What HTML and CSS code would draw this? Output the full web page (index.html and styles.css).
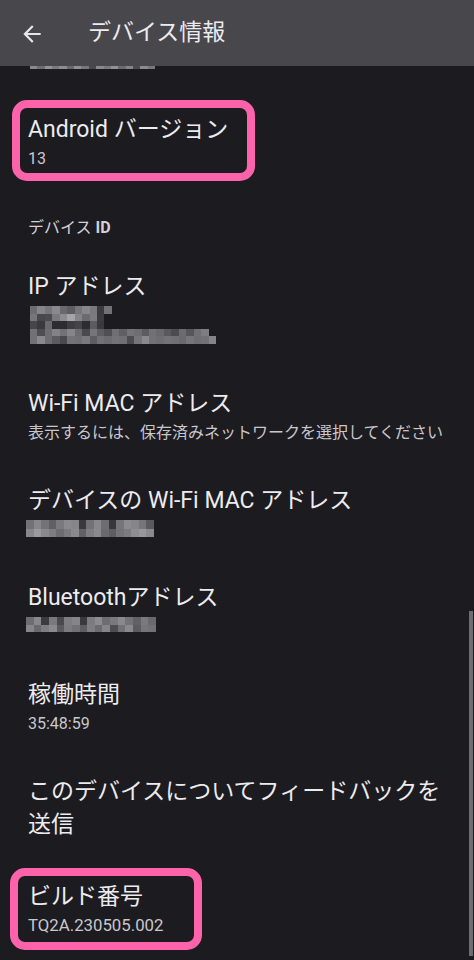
FILE: index.html
```html
<!DOCTYPE html>
<html lang="ja">
<head>
<meta charset="utf-8">
<title>デバイス情報</title>
<link rel="stylesheet" href="styles.css">
</head>
<body>
<div class="screen">
  <header class="appbar">
    <span class="back">
      <svg viewBox="0 0 24 24" width="26" height="26"><path fill="#e8e6ea" d="M20 11H7.83l5.59-5.59L12 4l-8 8 8 8 1.41-1.41L7.83 13H20v-2z"/></svg>
    </span>
    <h1 class="appbar-title">デバイス情報</h1>
  </header>

  <main class="list">
    <div class="peek">
      <svg class="mosaic" viewBox="0 0 17 1" width="125" height="3" preserveAspectRatio="none" shape-rendering="crispEdges">
        <rect x="0" y="0" width="1" height="1" fill="#8a8a8e"/><rect x="1" y="0" width="1" height="1" fill="#6e6e72"/><rect x="2" y="0" width="1" height="1" fill="#949498"/><rect x="3" y="0" width="1" height="1" fill="#7c7c80"/><rect x="4" y="0" width="1" height="1" fill="#8e8e92"/><rect x="5" y="0" width="1" height="1" fill="#6a6a6e"/><rect x="6" y="0" width="1" height="1" fill="#909094"/><rect x="7" y="0" width="1" height="1" fill="#78787c"/><rect x="8" y="0" width="1" height="1" fill="#4a4a4e"/><rect x="9" y="0" width="1" height="1" fill="#8a8a8e"/><rect x="10" y="0" width="1" height="1" fill="#7a7a7e"/><rect x="11" y="0" width="1" height="1" fill="#929296"/><rect x="12" y="0" width="1" height="1" fill="#6c6c70"/><rect x="13" y="0" width="1" height="1" fill="#86868a"/><rect x="14" y="0" width="1" height="1" fill="#4c4c50"/><rect x="15" y="0" width="1" height="1" fill="#8c8c90"/><rect x="16" y="0" width="1" height="1" fill="#78787c"/>
      </svg>
    </div>

    <div class="item">
      <div class="title">Android バージョン</div>
      <div class="sub">13</div>
      <span class="mark mark-android"></span>
    </div>

    <div class="category">デバイス <span class="category-strong">ID</span></div>

    <div class="item">
      <div class="title">IP アドレス</div>
      <svg class="mosaic mosaic-ip" viewBox="0 0 25 5" width="186" height="38" preserveAspectRatio="none" shape-rendering="crispEdges">
        <rect x="0" y="0" width="1" height="1" fill="#6d6d71"/><rect x="1" y="0" width="1" height="1" fill="#868689"/><rect x="2" y="0" width="1" height="1" fill="#77777b"/><rect x="3" y="0" width="1" height="1" fill="#8a8a8e"/><rect x="4" y="0" width="1" height="1" fill="#6a6a6e"/><rect x="5" y="0" width="1" height="1" fill="#5e5e62"/><rect x="6" y="0" width="1" height="1" fill="#77777b"/><rect x="7" y="0" width="1" height="1" fill="#88888c"/><rect x="8" y="0" width="1" height="1" fill="#7a7a7e"/><rect x="9" y="0" width="1" height="1" fill="#3a3a3f"/><rect x="10" y="0" width="1" height="1" fill="#727276"/>
        <rect x="0" y="1" width="1" height="1" fill="#77777b"/><rect x="1" y="1" width="1" height="1" fill="#48484c"/><rect x="2" y="1" width="1" height="1" fill="#4c4c50"/><rect x="3" y="1" width="1" height="1" fill="#7a7a7e"/><rect x="4" y="1" width="1" height="1" fill="#8d8d91"/><rect x="5" y="1" width="1" height="1" fill="#a5a5a9"/><rect x="6" y="1" width="1" height="1" fill="#858589"/><rect x="7" y="1" width="1" height="1" fill="#6c6c70"/><rect x="8" y="1" width="1" height="1" fill="#7c7c80"/><rect x="9" y="1" width="1" height="1" fill="#3c3c40"/>
        <rect x="0" y="2" width="1" height="1" fill="#46464a"/><rect x="1" y="2" width="1" height="1" fill="#3a3a3e"/><rect x="2" y="2" width="1" height="1" fill="#6a6a6e"/><rect x="3" y="2" width="1" height="1" fill="#2c2c31"/><rect x="4" y="2" width="1" height="1" fill="#2c2c31"/><rect x="5" y="2" width="1" height="1" fill="#3e3e42"/><rect x="6" y="2" width="1" height="1" fill="#44444a"/><rect x="7" y="2" width="1" height="1" fill="#2c2c31"/><rect x="8" y="2" width="1" height="1" fill="#5c5c60"/><rect x="9" y="2" width="1" height="1" fill="#3a3a3e"/>
        <rect x="0" y="3" width="1" height="1" fill="#727276"/><rect x="1" y="3" width="1" height="1" fill="#4e4e52"/><rect x="2" y="3" width="1" height="1" fill="#6e6e72"/><rect x="3" y="3" width="1" height="1" fill="#838387"/><rect x="4" y="3" width="1" height="1" fill="#727276"/><rect x="5" y="3" width="1" height="1" fill="#86868a"/><rect x="6" y="3" width="1" height="1" fill="#6c6c70"/><rect x="7" y="3" width="1" height="1" fill="#4a4a4e"/><rect x="8" y="3" width="1" height="1" fill="#767679"/><rect x="9" y="3" width="1" height="1" fill="#5e5e62"/><rect x="10" y="3" width="1" height="1" fill="#505054"/><rect x="11" y="3" width="1" height="1" fill="#707074"/><rect x="12" y="3" width="1" height="1" fill="#606064"/><rect x="13" y="3" width="1" height="1" fill="#747478"/><rect x="14" y="3" width="1" height="1" fill="#6e6e72"/><rect x="15" y="3" width="1" height="1" fill="#5c5c60"/><rect x="16" y="3" width="1" height="1" fill="#727276"/><rect x="17" y="3" width="1" height="1" fill="#6a6a6e"/><rect x="18" y="3" width="1" height="1" fill="#5a5a5e"/><rect x="19" y="3" width="1" height="1" fill="#4c4c50"/><rect x="20" y="3" width="1" height="1" fill="#6c6c70"/><rect x="21" y="3" width="1" height="1" fill="#56565a"/><rect x="22" y="3" width="1" height="1" fill="#707074"/><rect x="23" y="3" width="1" height="1" fill="#7e7e82"/>
        <rect x="0" y="4" width="1" height="1" fill="#727276"/><rect x="1" y="4" width="1" height="1" fill="#8a8a8e"/><rect x="2" y="4" width="1" height="1" fill="#6e6e72"/><rect x="3" y="4" width="1" height="1" fill="#5c5c60"/><rect x="4" y="4" width="1" height="1" fill="#4a4a4e"/><rect x="5" y="4" width="1" height="1" fill="#747478"/><rect x="6" y="4" width="1" height="1" fill="#707074"/><rect x="7" y="4" width="1" height="1" fill="#7a7a7e"/><rect x="8" y="4" width="1" height="1" fill="#5e5e62"/><rect x="9" y="4" width="1" height="1" fill="#727276"/><rect x="10" y="4" width="1" height="1" fill="#6c6c70"/><rect x="11" y="4" width="1" height="1" fill="#747478"/><rect x="12" y="4" width="1" height="1" fill="#707074"/><rect x="13" y="4" width="1" height="1" fill="#4c4c50"/><rect x="14" y="4" width="1" height="1" fill="#767679"/><rect x="15" y="4" width="1" height="1" fill="#8a8a8e"/><rect x="16" y="4" width="1" height="1" fill="#727276"/><rect x="17" y="4" width="1" height="1" fill="#6e6e72"/><rect x="18" y="4" width="1" height="1" fill="#747478"/><rect x="19" y="4" width="1" height="1" fill="#707074"/><rect x="20" y="4" width="1" height="1" fill="#6a6a6e"/><rect x="21" y="4" width="1" height="1" fill="#767679"/><rect x="22" y="4" width="1" height="1" fill="#6e6e72"/><rect x="23" y="4" width="1" height="1" fill="#727276"/><rect x="24" y="4" width="1" height="1" fill="#858589"/>
      </svg>
    </div>

    <div class="item">
      <div class="title">Wi-Fi MAC アドレス</div>
      <div class="sub">表示するには、保存済みネットワークを選択してください</div>
    </div>

    <div class="item">
      <div class="title">デバイスの Wi-Fi MAC アドレス</div>
      <svg class="mosaic mosaic-wifi" viewBox="0 0 17 2" width="128" height="17" preserveAspectRatio="none" shape-rendering="crispEdges">
        <rect x="0" y="0" width="1" height="1" fill="#727276"/><rect x="1" y="0" width="1" height="1" fill="#88888c"/><rect x="2" y="0" width="1" height="1" fill="#747478"/><rect x="3" y="0" width="1" height="1" fill="#606064"/><rect x="4" y="0" width="1" height="1" fill="#7a7a7e"/><rect x="5" y="0" width="1" height="1" fill="#8a8a8e"/><rect x="6" y="0" width="1" height="1" fill="#86868a"/><rect x="7" y="0" width="1" height="1" fill="#3a3a3e"/><rect x="8" y="0" width="1" height="1" fill="#727276"/><rect x="9" y="0" width="1" height="1" fill="#88888c"/><rect x="10" y="0" width="1" height="1" fill="#6e6e72"/><rect x="11" y="0" width="1" height="1" fill="#38383c"/><rect x="12" y="0" width="1" height="1" fill="#767679"/><rect x="13" y="0" width="1" height="1" fill="#8c8c90"/><rect x="14" y="0" width="1" height="1" fill="#86868a"/><rect x="15" y="0" width="1" height="1" fill="#767679"/><rect x="16" y="0" width="1" height="1" fill="#5a5a5e"/>
        <rect x="0" y="1" width="1" height="1" fill="#88888c"/><rect x="1" y="1" width="1" height="1" fill="#9a9a9e"/><rect x="2" y="1" width="1" height="1" fill="#8a8a8e"/><rect x="3" y="1" width="1" height="1" fill="#7e7e82"/><rect x="4" y="1" width="1" height="1" fill="#6c6c70"/><rect x="5" y="1" width="1" height="1" fill="#7a7a7e"/><rect x="6" y="1" width="1" height="1" fill="#8a8a8e"/><rect x="7" y="1" width="1" height="1" fill="#626266"/><rect x="8" y="1" width="1" height="1" fill="#7e7e82"/><rect x="9" y="1" width="1" height="1" fill="#8a8a8e"/><rect x="10" y="1" width="1" height="1" fill="#6a6a6e"/><rect x="11" y="1" width="1" height="1" fill="#5e5e62"/><rect x="12" y="1" width="1" height="1" fill="#747478"/><rect x="13" y="1" width="1" height="1" fill="#7c7c80"/><rect x="14" y="1" width="1" height="1" fill="#8e8e92"/><rect x="15" y="1" width="1" height="1" fill="#98989c"/><rect x="16" y="1" width="1" height="1" fill="#8a8a8e"/>
      </svg>
    </div>

    <div class="item">
      <div class="title">Bluetoothアドレス</div>
      <svg class="mosaic mosaic-bt" viewBox="0 0 17 2" width="130" height="15" preserveAspectRatio="none" shape-rendering="crispEdges">
        <rect x="0" y="0" width="1" height="1" fill="#6e6e72"/><rect x="1" y="0" width="1" height="1" fill="#88888c"/><rect x="2" y="0" width="1" height="1" fill="#3c3c40"/><rect x="3" y="0" width="1" height="1" fill="#7a7a7e"/><rect x="4" y="0" width="1" height="1" fill="#4a4a4e"/><rect x="5" y="0" width="1" height="1" fill="#7e7e82"/><rect x="6" y="0" width="1" height="1" fill="#86868a"/><rect x="7" y="0" width="1" height="1" fill="#3a3a3e"/><rect x="8" y="0" width="1" height="1" fill="#7c7c80"/><rect x="9" y="0" width="1" height="1" fill="#8c8c90"/><rect x="10" y="0" width="1" height="1" fill="#6e6e72"/><rect x="11" y="0" width="1" height="1" fill="#7a7a7e"/><rect x="12" y="0" width="1" height="1" fill="#8a8a8e"/><rect x="13" y="0" width="1" height="1" fill="#747478"/><rect x="14" y="0" width="1" height="1" fill="#626266"/><rect x="15" y="0" width="1" height="1" fill="#7a7a7e"/><rect x="16" y="0" width="1" height="1" fill="#6a6a6e"/>
        <rect x="0" y="1" width="1" height="1" fill="#86868a"/><rect x="1" y="1" width="1" height="1" fill="#6a6a6e"/><rect x="2" y="1" width="1" height="1" fill="#7e7e82"/><rect x="3" y="1" width="1" height="1" fill="#8a8a8e"/><rect x="4" y="1" width="1" height="1" fill="#5a5a5e"/><rect x="5" y="1" width="1" height="1" fill="#7c7c80"/><rect x="6" y="1" width="1" height="1" fill="#727276"/><rect x="7" y="1" width="1" height="1" fill="#5e5e62"/><rect x="8" y="1" width="1" height="1" fill="#7e7e82"/><rect x="9" y="1" width="1" height="1" fill="#6c6c70"/><rect x="10" y="1" width="1" height="1" fill="#86868a"/><rect x="11" y="1" width="1" height="1" fill="#4e4e52"/><rect x="12" y="1" width="1" height="1" fill="#727276"/><rect x="13" y="1" width="1" height="1" fill="#8a8a8e"/><rect x="14" y="1" width="1" height="1" fill="#5c5c60"/><rect x="15" y="1" width="1" height="1" fill="#767679"/><rect x="16" y="1" width="1" height="1" fill="#727276"/>
      </svg>
    </div>

    <div class="item">
      <div class="title">稼働時間</div>
      <div class="sub">35:48:59</div>
    </div>

    <div class="item">
      <div class="title">このデバイスについてフィードバックを送信</div>
    </div>

    <div class="item">
      <div class="title">ビルド番号</div>
      <div class="sub sub-build">TQ2A.230505.002</div>
      <span class="mark mark-build"></span>
    </div>
  </main>

  <div class="scrollbar"></div>
</div>
</body>
</html>
```

FILE: styles.css
```css
* {
  box-sizing: border-box;
}

html, body {
  margin: 0;
  padding: 0;
  background: #1c1b20;
}

body {
  font-family: "Roboto", "Noto Sans CJK JP", sans-serif;
  color: #ecebef;
}

.screen {
  position: relative;
  width: 474px;
  height: 960px;
  overflow: hidden;
  background: #1c1b20;
}

.appbar {
  height: 66px;
  background: #48474c;
  display: flex;
  align-items: center;
}

.back {
  display: flex;
  align-items: center;
  justify-content: center;
  width: 26px;
  height: 26px;
  margin-left: 19px;
  margin-top: 1px;
}

.back svg {
  display: block;
}

.appbar-title {
  margin: 0 0 0 43px;
  font-size: 23px;
  font-weight: 400;
  line-height: 32px;
  color: #ecebef;
}

.list {
  display: flex;
  flex-direction: column;
}

.peek {
  height: 26.5px;
  padding-left: 30px;
}

.mosaic {
  display: block;
}

.item {
  position: relative;
  padding: 20px 28px 19px 28px;
}

.title {
  font-size: 23px;
  line-height: 33px;
  color: #ecebef;
}

.sub {
  font-size: 16px;
  line-height: 25px;
  color: #c9c7cc;
}

.sub-build {
  font-size: 16.8px;
}

.category {
  padding: 28.5px 28px 11.5px 28px;
  font-size: 16px;
  line-height: 20px;
  font-weight: 400;
  color: #d3d1d6;
}

.category-strong {
  font-weight: 700;
}

.mosaic-ip {
  margin: 3px 0 4px 2px;
}

.mosaic-wifi {
  margin: 3.5px 0 4.5px -2px;
}

.mosaic-bt {
  margin: 3.5px 0 6.5px -2px;
}

.mark {
  position: absolute;
  border: 8px solid #fd63aa;
  border-radius: 15px;
  pointer-events: none;
}

.mark-android {
  top: 7.5px;
  left: 12px;
  width: 243px;
  height: 81px;
}

.mark-build {
  top: 8.5px;
  left: 10px;
  width: 192px;
  height: 82px;
}

.scrollbar {
  position: absolute;
  right: 1.5px;
  top: 611px;
  width: 3.5px;
  height: 345px;
  background: #6e6e72;
}
```
